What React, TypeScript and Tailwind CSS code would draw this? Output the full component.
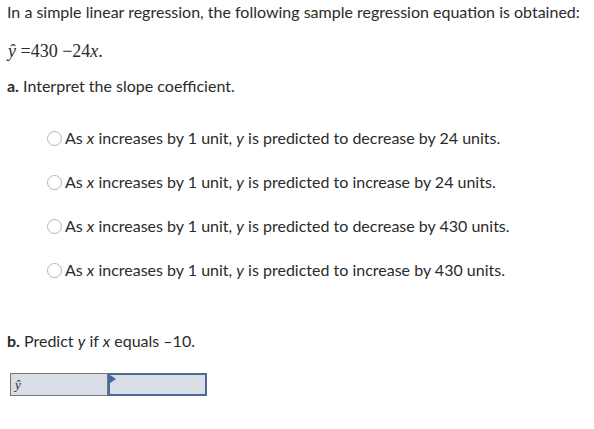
const OPTIONS = [
  'decrease by 24 units.',
  'increase by 24 units.',
  'decrease by 430 units.',
  'increase by 430 units.',
]

function Radio() {
  return <span className="inline-block w-[15px] h-[15px] rounded-full border border-[#b5b5b5] bg-white shrink-0" />
}

export default function App() {
  return (
    <div className="w-[594px] h-[429px] bg-white text-[#2b2b2b] font-['Lato'] text-[16px] pl-[7px]">
      <p className="pt-[3px] leading-[18px]">
        In a simple linear regression, the following sample regression equation is obtained:
      </p>
      <div className="mt-[19px] [font-family:'Liberation_Serif',serif] text-[18px] leading-[22px] pl-[1px]">
        <span className="italic">ŷ</span> =430 −24<span className="italic">x</span>.
      </div>
      <p className="mt-[15px] leading-[18px]">
        <span className="font-bold">a.</span> Interpret the slope coefficient.
      </p>
      <div className="mt-[34px] pl-[40px] flex flex-col gap-[26px]">
        {OPTIONS.map(o => (
          <div key={o} className="flex items-center gap-[3px] leading-[18px]">
            <Radio />
            <span>
              As <span className="italic">x</span> increases by 1 unit, <span className="italic">y</span> is predicted to {o}
            </span>
          </div>
        ))}
      </div>
      <p className="mt-[53px] leading-[18px]">
        <span className="font-bold">b.</span> Predict <span className="italic">y</span> if <span className="italic">x</span> equals –10.
      </p>
      <div className="mt-[23px] ml-[3px] flex">
        <div className="w-[98px] h-[23px] border border-[#777] bg-[#d8dde6] flex items-center pl-[4px] [font-family:'Liberation_Serif',serif] italic text-[13px]">
          ŷ
        </div>
        <div className="relative w-[99px] h-[23px] border-2 border-[#4d6a94] bg-[#d8dde6]">
          <span className="absolute left-0 top-0 w-0 h-0 border-t-[4px] border-b-[4px] border-l-[6px] border-t-transparent border-b-transparent border-l-[#3a66b0]" />
        </div>
      </div>
    </div>
  )
}
